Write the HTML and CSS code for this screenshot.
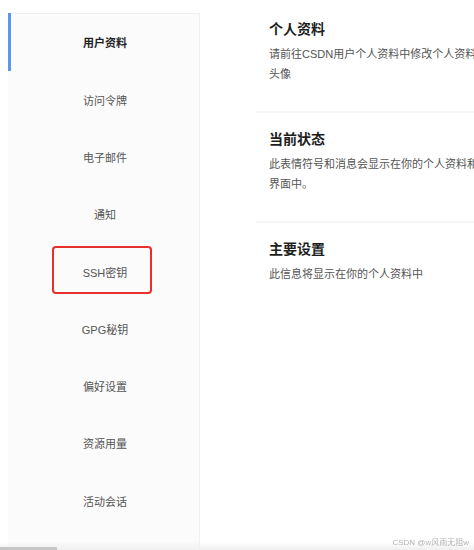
FILE: index.html
```html
<!DOCTYPE html>
<html lang="zh-CN">
<head>
  <meta charset="UTF-8">
  <meta name="viewport" content="width=device-width, initial-scale=1.0">
  <title>设置</title>
  <link rel="stylesheet" href="styles.css">
</head>
<body>
  <div class="page">
    <div class="sidebar">
      <a href="#profile" class="menu-item active">用户资料</a>
      <a href="#token" class="menu-item">访问令牌</a>
      <a href="#email" class="menu-item">电子邮件</a>
      <a href="#notice" class="menu-item">通知</a>
      <a href="#ssh" class="menu-item">SSH密钥<span class="mark"></span></a>
      <a href="#gpg" class="menu-item">GPG秘钥</a>
      <a href="#prefs" class="menu-item">偏好设置</a>
      <a href="#usage" class="menu-item">资源用量</a>
      <a href="#sessions" class="menu-item">活动会话</a>
    </div>
    <div class="main">
      <div class="section">
        <h3>个人资料</h3>
        <p>请前往CSDN用户个人资料中修改个人资料和头像</p>
      </div>
      <div class="section">
        <h3>当前状态</h3>
        <p>此表情符号和消息会显示在你的个人资料和界面中。</p>
      </div>
      <div class="section">
        <h3>主要设置</h3>
        <p>此信息将显示在你的个人资料中</p>
      </div>
    </div>
  </div>
  <div class="bottom-bar"><span class="thumb"></span></div>
  <div class="watermark">CSDN @w风雨无阻w</div>
</body>
</html>
```

FILE: styles.css
```css
*{
  box-sizing: border-box;
}
body{
  margin: 0;
  overflow: hidden;
  background: #fff;
  font-family: "Liberation Sans", "Noto Sans CJK SC", sans-serif;
  color: #333;
}
.page{
  display: flex;
  align-items: flex-start;
  padding-left: 8px;
}
.sidebar{
  flex-shrink: 0;
  width: 192px;
  margin-top: 13px;
  padding-bottom: 40px;
  background-color: #fbfbfb;
  border: 1px solid #f0f0f0;
  border-left: 0;
  display: flex;
  flex-direction: column;
}
.sidebar .menu-item{
  position: relative;
  height: 57.25px;
  display: flex;
  align-items: center;
  justify-content: center;
  border-left: 3px solid transparent;
  font-size: 11px;
  color: #555;
  text-decoration: none;
}
.sidebar .menu-item.active{
  border-left-color: #5a98ef;
  color: #222;
  font-weight: 600;
  margin-top: -1px;
  height: 58.25px;
}
/* red annotation frame round the SSH item */
.sidebar .mark{
  position: absolute;
  left: 41px;
  top: 3px;
  width: 100px;
  height: 48px;
  border: 2px solid #e6302b;
  border-radius: 4px;
}
.main{
  flex-shrink: 0;
  width: 320px;
  margin-left: 56px;
  padding-top: 3px;
}
.section{
  padding: 15px 13px 27px;
  border-bottom: 2px solid #f4f4f4;
}
.section:last-child{
  border-bottom: 0;
}
.section h3{
  margin: 0;
  font-size: 14px;
  line-height: 22px;
  font-weight: bold;
  color: #1e1e1e;
}
.section p{
  margin: 4px 0 0;
  width: 219px;
  font-size: 11px;
  line-height: 20px;
  color: #555;
}
.bottom-bar{
  position: fixed;
  left: 0;
  right: 0;
  bottom: 0;
  height: 8px;
  background: linear-gradient(to bottom, rgba(240, 240, 240, 0), #efefef);
}
.bottom-bar .thumb{
  position: absolute;
  left: 0;
  bottom: 0;
  width: 57px;
  height: 3px;
  background-color: #c6c6c6;
}
.watermark{
  position: fixed;
  right: 5px;
  bottom: 3px;
  font-size: 8px;
  color: #b3b3b3;
}
```
